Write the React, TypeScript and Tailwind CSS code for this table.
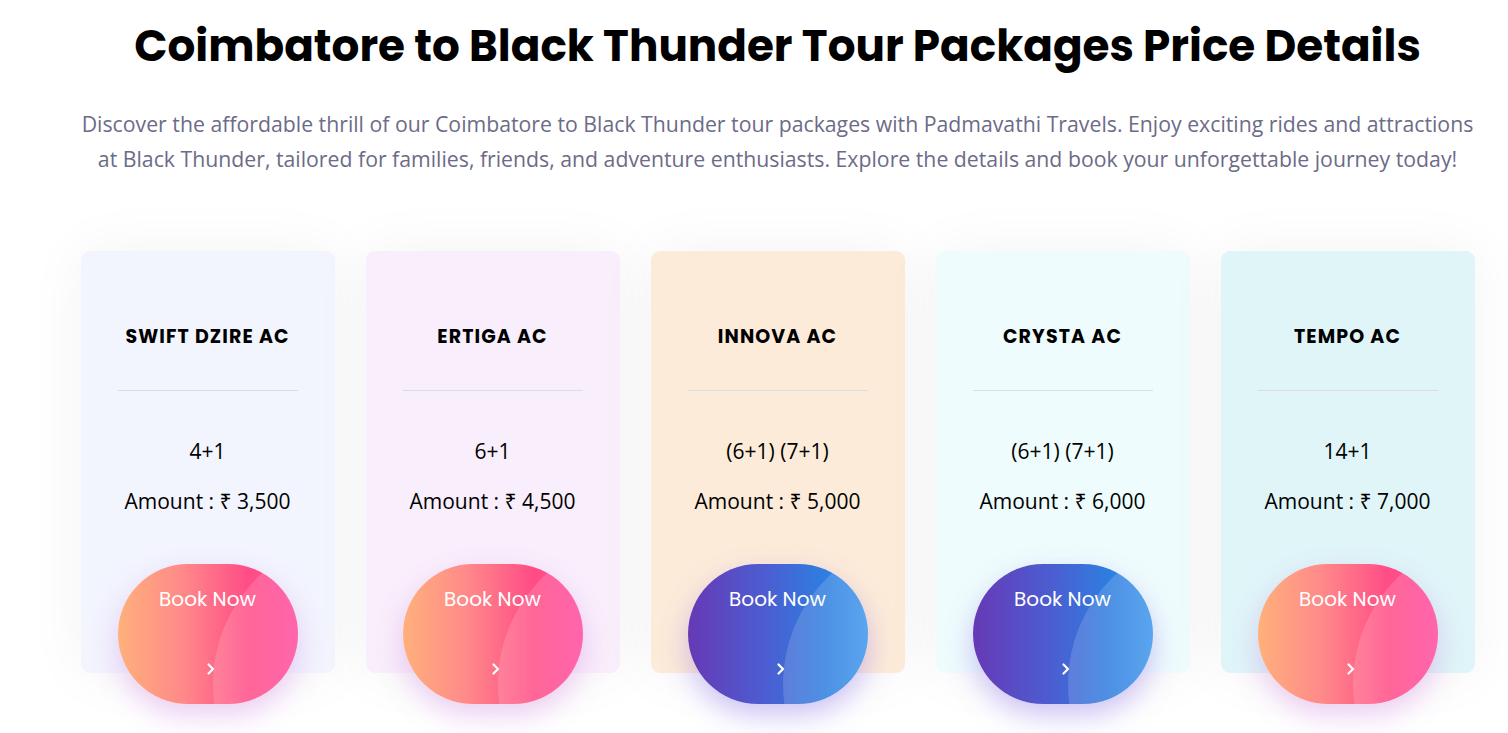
import React from "react";

type Pkg = { name: string; cap: string; amount: string; bg: string; blue: boolean };

const pkgs: Pkg[] = [
  { name: "SWIFT DZIRE AC", cap: "4+1", amount: "3,500", bg: "bg-[#f2f4fe]", blue: false },
  { name: "ERTIGA AC", cap: "6+1", amount: "4,500", bg: "bg-[#f9eefb]", blue: false },
  { name: "INNOVA AC", cap: "(6+1) (7+1)", amount: "5,000", bg: "bg-[#fdebd9]", blue: true },
  { name: "CRYSTA AC", cap: "(6+1) (7+1)", amount: "6,000", bg: "bg-[#effcfd]", blue: true },
  { name: "TEMPO AC", cap: "14+1", amount: "7,000", bg: "bg-[#dff5f8]", blue: false },
];

function Chevron() {
  return (
    <svg width="10" height="14" viewBox="0 0 10 14" fill="none">
      <path d="M2.5 2.5 L7 7 L2.5 11.5" stroke="white" strokeWidth="2.2" strokeLinecap="round" strokeLinejoin="round" />
    </svg>
  );
}

function BookButton({ blue }: { blue: boolean }) {
  return (
    <div
      className={
        "relative mt-[49px] w-[180px] h-[140px] rounded-full overflow-hidden shrink-0 " +
        (blue
          ? "bg-[linear-gradient(to_right,#6739b6,#4a5fd2_45%,#2f7ddf_75%,#3d96ec)] shadow-[0_12px_28px_rgba(120,90,230,0.35)]"
          : "bg-[linear-gradient(to_right,#ffb07b,#ff8a8a_35%,#ff4d86_72%,#ff4a9e)] shadow-[0_12px_28px_rgba(200,110,220,0.32)]")
      }
    >
      <div className="absolute left-[95px] top-[-30px] w-[300px] h-[300px] rounded-full bg-white/15" />
      <div className="relative flex flex-col items-center">
        <div className="mt-[22px] text-[20px] leading-[26px] text-white font-['Poppins','Inter','Noto_Sans',sans-serif] font-normal">
          Book Now
        </div>
        <div className="mt-[50px] ml-[6px]">
          <Chevron />
        </div>
      </div>
    </div>
  );
}

export default function App() {
  return (
    <div className="w-[1508px] min-h-[733px] bg-white overflow-hidden pl-[47px]">
      <div className="flex flex-col items-center pt-[16px]">
        <h1 className="text-[43.7px] leading-[60px] font-bold text-black font-['Poppins','Inter',sans-serif]">
          Coimbatore to Black Thunder Tour Packages Price Details
        </h1>
        <p className="mt-[30px] w-[1400px] text-center text-[21.25px] leading-[35px] text-[#6c6b88] font-['Open_Sans','Noto_Sans',sans-serif]">
          Discover the affordable thrill of our Coimbatore to Black Thunder tour packages with Padmavathi Travels. Enjoy exciting rides and attractions at Black Thunder, tailored for families, friends, and adventure enthusiasts. Explore the details and book your unforgettable journey today!
        </p>
        <div className="mt-[75px] flex gap-[31px]">
          {pkgs.map((p) => (
            <div
              key={p.name}
              className={
                "w-[254px] h-[422px] rounded-[9px] flex flex-col items-center pt-[72px] shadow-[0_0_60px_rgba(0,0,0,0.05)] " +
                p.bg
              }
            >
              <div className="text-[19px] leading-[28px] font-bold tracking-[1.1px] text-black font-['Poppins','Inter',sans-serif]">
                {p.name}
              </div>
              <div className="mt-[39px] w-[180px] h-0 border-t border-[#dcdce2]" />
              <div className="mt-[46px] text-[21px] leading-[28px] text-black font-['Open_Sans','Noto_Sans',sans-serif]">
                {p.cap}
              </div>
              <div className="mt-[22px] text-[21px] leading-[28px] text-black font-['Open_Sans','Noto_Sans',sans-serif]">
                Amount : ₹ {p.amount}
              </div>
              <BookButton blue={p.blue} />
            </div>
          ))}
        </div>
      </div>
    </div>
  );
}
